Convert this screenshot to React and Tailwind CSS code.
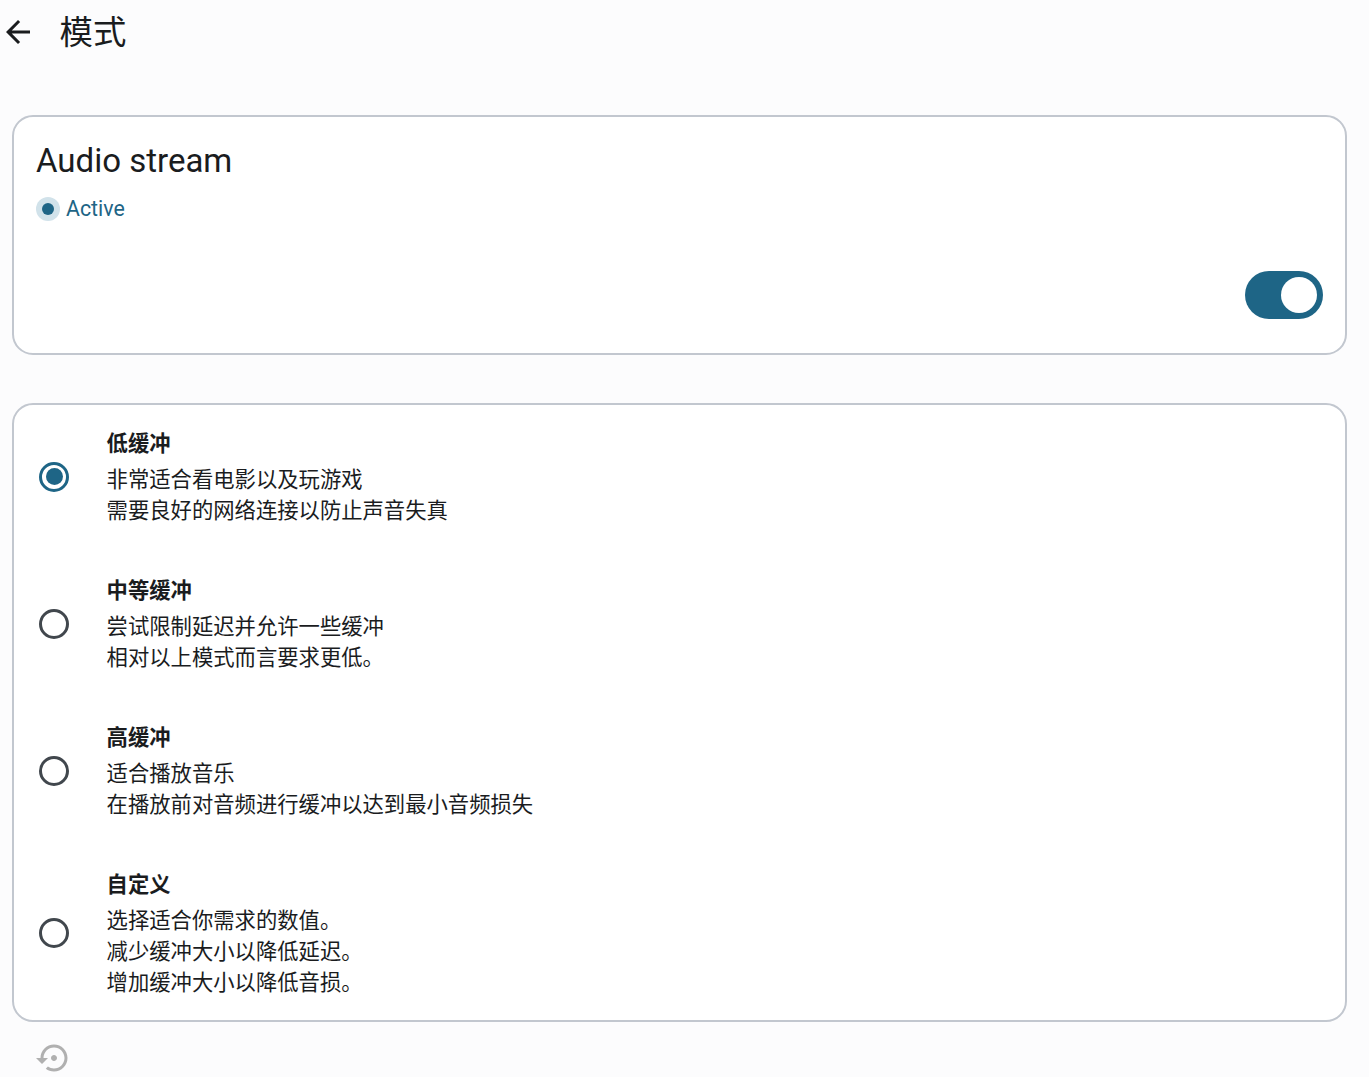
const font = { fontFamily: '"Roboto", "Noto Sans CJK SC", sans-serif' };

function Radio({ on }) {
  return (
    <div className={`w-[30px] h-[30px] rounded-full border-[3px] flex items-center justify-center shrink-0 ${on ? "border-[#1e6586]" : "border-[#41474d]"}`}>
      {on && <div className="w-[17px] h-[17px] rounded-full bg-[#1e6586]" />}
    </div>
  );
}

function Row({ on, title, lines }) {
  return (
    <div className="flex items-center">
      <div className="w-[92.6px] pl-[25px] shrink-0"><Radio on={on} /></div>
      <div>
        <div className="text-[21.33px] leading-[34px] font-bold text-[#1a1c1e] mb-[3px]">{title}</div>
        {lines.map((l) => (
          <div key={l} className="text-[21.33px] leading-[31px] text-[#1a1c1e]">{l}</div>
        ))}
      </div>
    </div>
  );
}

export default function App() {
  return (
    <div style={font} className="w-[1369px] h-[1077px] overflow-hidden bg-[#fcfcfd]">
      <div className="h-[64px] flex items-center">
        <svg viewBox="0 0 24 24" className="w-[36px] h-[36px] fill-[#1a1c1e]"><path d="M20 11H7.83l5.59-5.59L12 4l-8 8 8 8 1.41-1.41L7.83 13H20v-2z" /></svg>
        <div className="ml-[23.6px] pt-[2px] text-[33.4px] leading-[40px] text-[#1a1c1e]">模式</div>
      </div>
      <div className="mx-[12px] mt-[51px] w-[1335px] h-[240px] bg-white border-2 border-[#c2c7cf] rounded-[21px] pl-[22px] pr-[22px] pt-[22px]">
        <div className="text-[33px] leading-[44px] text-[#1a1c1e]">Audio stream</div>
        <div className="flex items-center mt-[14px] h-[24px]">
          <div className="w-[24px] h-[24px] rounded-full bg-[#d1e2ea] flex items-center justify-center">
            <div className="w-[12px] h-[12px] rounded-full bg-[#1e6586]" />
          </div>
          <span className="ml-[6px] text-[21.33px] leading-[24px] text-[#1e6586]">Active</span>
        </div>
        <div className="flex justify-end mt-[50px]">
          <div className="w-[78px] h-[48px] rounded-full bg-[#1e6586] flex items-center justify-end pr-[6px]">
            <div className="w-[36px] h-[36px] rounded-full bg-white" />
          </div>
        </div>
      </div>
      <div className="mx-[12px] mt-[48px] w-[1335px] h-[619px] bg-white border-2 border-[#c2c7cf] rounded-[21px] pt-[22px] flex flex-col gap-[48px]">
        <Row on title="低缓冲" lines={["非常适合看电影以及玩游戏", "需要良好的网络连接以防止声音失真"]} />
        <Row title="中等缓冲" lines={["尝试限制延迟并允许一些缓冲", "相对以上模式而言要求更低。"]} />
        <Row title="高缓冲" lines={["适合播放音乐", "在播放前对音频进行缓冲以达到最小音频损失"]} />
        <Row title="自定义" lines={["选择适合你需求的数值。", "减少缓冲大小以降低延迟。", "增加缓冲大小以降低音损。"]} />
      </div>
      <div className="pl-[36px] mt-[18px]">
        <svg viewBox="0 0 24 24" className="w-[36px] h-[36px] fill-[#b0b0b0]"><path d="M14 12c0-1.1-.9-2-2-2s-2 .9-2 2 .9 2 2 2 2-.9 2-2zm-2-9c-4.97 0-9 4.03-9 9H0l4 4 4-4H5c0-3.87 3.13-7 7-7s7 3.13 7 7-3.13 7-7 7c-1.51 0-2.91-.49-4.06-1.3l-1.42 1.44C8.04 20.3 9.94 21 12 21c4.97 0 9-4.03 9-9s-4.03-9-9-9z" /></svg>
      </div>
    </div>
  );
}
